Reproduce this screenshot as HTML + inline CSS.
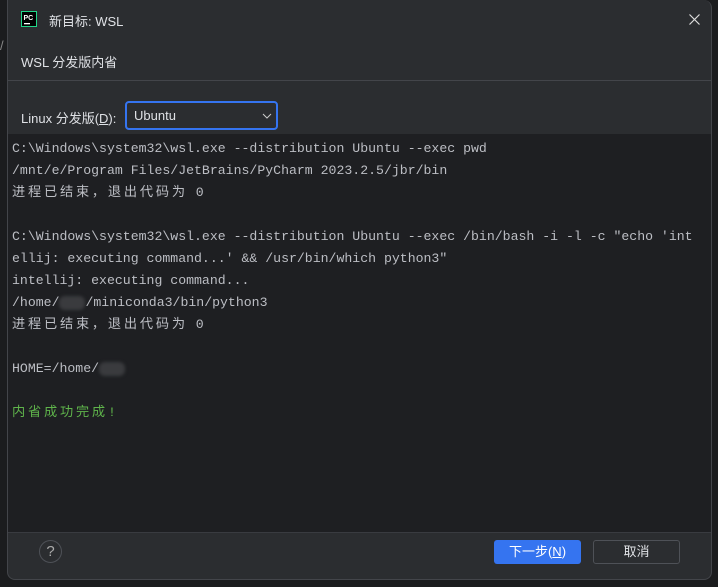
<!DOCTYPE html>
<html><head><meta charset="utf-8"><style>
body{margin:0;width:718px;height:587px;background:#1b1c1e;position:relative;overflow:hidden;font-family:"Liberation Sans","Noto Sans CJK SC",sans-serif;color:#dfe1e5}
.dlg{position:absolute;left:7px;top:0;width:703px;height:579px;background:#2b2d30;border:1px solid #43454a;border-top:none;border-radius:0 0 8px 8px;border-top-right-radius:8px;overflow:hidden}
.t{position:absolute;font-size:13px}
.con{position:absolute;left:0;top:134px;width:703px;height:398px;background:#1e1f22;border-bottom:1px solid #393b40}
.con pre{margin:0;padding:4px 0 0 4px;font-family:"Liberation Mono","Noto Sans CJK SC",monospace;font-size:13.2px;line-height:22px;color:#bcbec4}
.c{letter-spacing:2.8px}
.g{color:#5fb44b}
.blur{display:inline-block;width:26px;height:14px;background:#3a3b3e;border-radius:6px;vertical-align:middle;filter:blur(1.5px)}
</style></head><body>
<div style="position:absolute;left:0;top:38px;color:#888;font-size:13px">/</div>
<div class="dlg">
<svg style="position:absolute;left:13px;top:11px" width="16" height="16"><rect x="0.5" y="0.5" width="15" height="15" fill="#000" stroke="#21d789"/><text x="2.5" y="9" font-size="7" font-weight="bold" fill="#fff" font-family="Liberation Sans">PC</text><rect x="3" y="12" width="6" height="1.3" fill="#fff"/></svg>
<div class="t" style="left:41px;top:11px">新目标: WSL</div>
<svg style="position:absolute;left:681px;top:14px" width="11" height="11"><path d="M0.5 0.5L10.5 10.5M10.5 0.5L0.5 10.5" stroke="#ddd" stroke-width="1.2"/></svg>
<div class="t" style="left:13px;top:52px">WSL 分发版内省</div>
<div style="position:absolute;left:0;top:80px;width:703px;height:1px;background:#43454a"></div>
<div class="t" style="left:13px;top:108px">Linux 分发版(<u>D</u>):</div>
<div style="position:absolute;left:117px;top:101px;width:149px;height:25px;border:2px solid #3574f0;border-radius:4px;background:#2b2d30"><span class="t" style="left:7px;top:5px">Ubuntu</span><svg style="position:absolute;left:135px;top:10px" width="10" height="6"><path d="M1 1L5 5L9 1" stroke="#ccc" fill="none"/></svg></div>
<div class="con"><pre>C:\Windows\system32\wsl.exe --distribution Ubuntu --exec pwd
/mnt/e/Program Files/JetBrains/PyCharm 2023.2.5/jbr/bin
<span class="c">进程已结束，退出代码为</span> 0

C:\Windows\system32\wsl.exe --distribution Ubuntu --exec /bin/bash -i -l -c "echo 'int
ellij: executing command...' &amp;&amp; /usr/bin/which python3"
intellij: executing command...
/home/<span class="blur"></span>/miniconda3/bin/python3
<span class="c">进程已结束，退出代码为</span> 0

HOME=/home/<span class="blur"></span>

<span class="c g">内省成功完成</span><span class="g">!</span></pre></div>
<div style="position:absolute;left:31px;top:540px;width:21px;height:21px;border:1px solid #4e5157;border-radius:50%;text-align:center;line-height:21px;font-size:15px;color:#aaa">?</div>
<div style="position:absolute;left:486px;top:540px;width:87px;height:24px;background:#3574f0;border-radius:3px;text-align:center;line-height:24px;font-size:13px;color:#fff">下一步(<u>N</u>)</div>
<div style="position:absolute;left:585px;top:540px;width:85px;height:22px;border:1px solid #4e5157;border-radius:3px;text-align:center;line-height:22px;font-size:13px">取消</div>
</div>
</body></html>
